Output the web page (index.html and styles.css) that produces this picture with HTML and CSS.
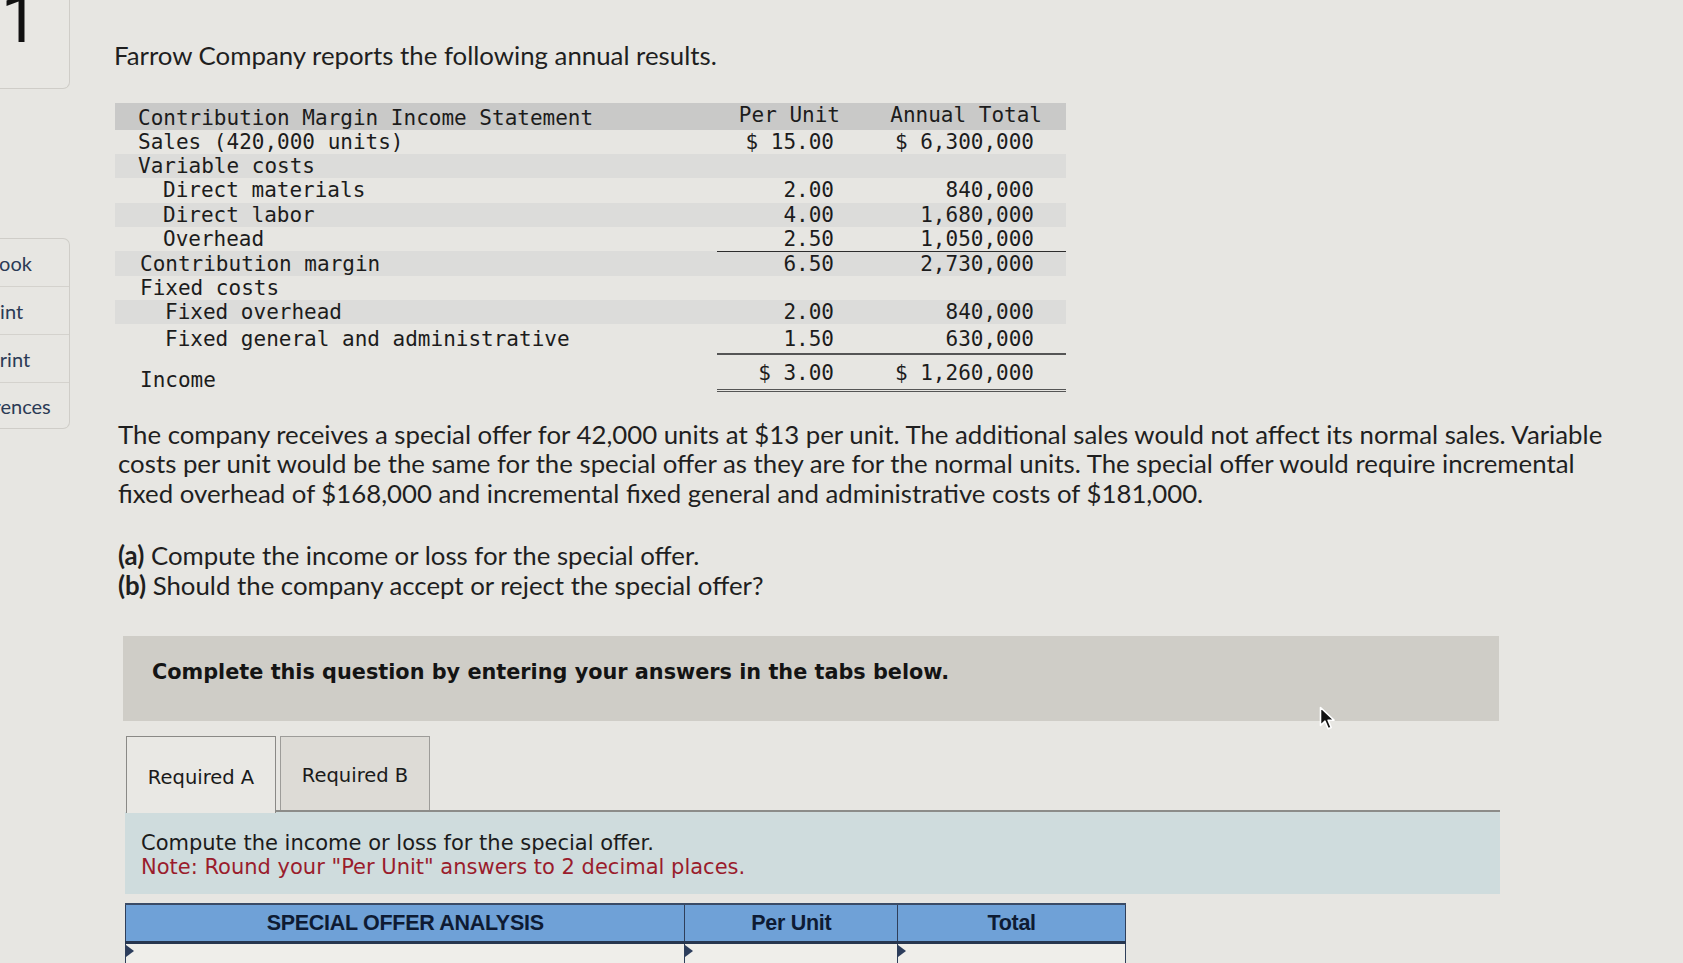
FILE: index.html
```html
<!DOCTYPE html>
<html lang="en">
<head>
<meta charset="utf-8">
<title>Farrow Company - Special Offer</title>
<link rel="stylesheet" href="styles.css">
</head>
<body>
<div class="page">
  <aside class="rail">
    <div class="qnum"><span>1</span></div>
    <ul class="tools">
      <li class="t-ebook"><span>eBook</span></li>
      <li class="t-hint"><span>Hint</span></li>
      <li class="t-print"><span>Print</span></li>
      <li class="t-refs"><span>References</span></li>
    </ul>
  </aside>

  <main class="content">
    <p class="intro">Farrow Company reports the following annual results.</p>

    <table class="cmis">
      <colgroup><col class="c-label"><col class="c-pu"><col class="c-at"></colgroup>
      <tr class="hd shade-dark">
        <td class="l0 hd-label">Contribution Margin Income Statement</td>
        <td class="hd-pu">Per Unit</td>
        <td class="hd-at">Annual Total</td>
      </tr>
      <tr class="r">
        <td class="l0">Sales (420,000 units)</td>
        <td class="pu">$ 15.00</td>
        <td class="at">$ 6,300,000</td>
      </tr>
      <tr class="r shade">
        <td class="l0">Variable costs</td>
        <td class="pu"></td>
        <td class="at"></td>
      </tr>
      <tr class="r">
        <td class="l1">Direct materials</td>
        <td class="pu">2.00</td>
        <td class="at">840,000</td>
      </tr>
      <tr class="r shade">
        <td class="l1">Direct labor</td>
        <td class="pu">4.00</td>
        <td class="at">1,680,000</td>
      </tr>
      <tr class="r">
        <td class="l1">Overhead</td>
        <td class="pu u1">2.50</td>
        <td class="at u1">1,050,000</td>
      </tr>
      <tr class="r shade">
        <td class="l0b">Contribution margin</td>
        <td class="pu">6.50</td>
        <td class="at">2,730,000</td>
      </tr>
      <tr class="r">
        <td class="l0b">Fixed costs</td>
        <td class="pu"></td>
        <td class="at"></td>
      </tr>
      <tr class="r shade">
        <td class="l1b">Fixed overhead</td>
        <td class="pu">2.00</td>
        <td class="at">840,000</td>
      </tr>
      <tr class="r tall">
        <td class="l1b">Fixed general and administrative</td>
        <td class="pu u2">1.50</td>
        <td class="at u2">630,000</td>
      </tr>
      <tr class="r income">
        <td class="l0b inc-label">Income</td>
        <td class="pu u3">$ 3.00</td>
        <td class="at u3">$ 1,260,000</td>
      </tr>
    </table>

    <p class="offer">The company receives a special offer for 42,000 units at $13 per unit. The additional sales would not affect its normal sales. Variable<br>costs per unit would be the same for the special offer as they are for the normal units. The special offer would require incremental<br>fixed overhead of $168,000 and incremental fixed general and administrative costs of $181,000.</p>

    <p class="req"><b>(a)</b> Compute the income or loss for the special offer.<br><b>(b)</b> Should the company accept or reject the special offer?</p>

    <div class="complete">Complete this question by entering your answers in the tabs below.</div>

    <div class="tabs">
      <div class="tab active">Required A</div>
      <div class="tab">Required B</div>
    </div>

    <div class="instr">
      <div>Compute the income or loss for the special offer.</div>
      <div class="note">Note: Round your "Per Unit" answers to 2 decimal places.</div>
    </div>

    <table class="soa">
      <colgroup><col class="s1"><col class="s2"><col class="s3"></colgroup>
      <tr class="soa-hd">
        <th>SPECIAL OFFER ANALYSIS</th>
        <th>Per Unit</th>
        <th>Total</th>
      </tr>
      <tr class="soa-row">
        <td><span class="mark"></span></td>
        <td><span class="mark"></span></td>
        <td><span class="mark"></span></td>
      </tr>
    </table>
  </main>

  <svg class="cursor" width="18" height="26" viewBox="0 0 18 26" aria-hidden="true">
    <path d="M1.5 1.5 L1.5 19.5 L6 15.2 L9.2 22.8 L12.2 21.5 L9.1 14.2 L15 14.2 Z" fill="#111" stroke="#fff" stroke-width="1.6" stroke-linejoin="round"/>
  </svg>
</div>
</body>
</html>
```

FILE: styles.css
```css
html, body {
  margin: 0;
  padding: 0;
}
body {
  background: #e7e6e2;
  color: #1f1f1f;
  font-family: Lato, "Open Sans", "Liberation Sans", sans-serif;
  overflow: hidden;
}
.page {
  position: relative;
  display: flex;
  align-items: flex-start;
  width: 1683px;
  height: 963px;
  overflow: hidden;
}

/* left rail */
.rail {
  width: 70px;
  flex: 0 0 70px;
  display: flex;
  flex-direction: column;
}
.qnum {
  height: 88px;
  border-right: 1px solid #cfcdc8;
  border-bottom: 1px solid #cfcdc8;
  border-bottom-right-radius: 7px;
  overflow: hidden;
  background: #e8e7e3;
}
.qnum span {
  display: block;
  font-family: Roboto, "Liberation Sans", sans-serif;
  font-size: 66px;
  line-height: 1;
  color: #111;
  margin-top: -13px;
  margin-left: 1px;
}
.tools {
  list-style: none;
  margin: 149px 0 0 0;
  padding: 0;
  border: 1px solid #cfcdc8;
  border-left: none;
  border-radius: 0 7px 7px 0;
  overflow: hidden;
}
.tools li {
  height: 47px;
  display: flex;
  align-items: center;
  border-bottom: 1px solid #d4d2cd;
  font-size: 20px;
  color: #2b3a55;
  white-space: nowrap;
}
.tools li:last-child { border-bottom: none; height: 45px; }
.t-ebook span { margin-left: -24px; }
.t-hint span { margin-left: -15px; }
.t-print span { margin-left: -12px; }
.t-refs span { margin-left: -46px; }

/* main column */
.content {
  margin-left: 44px;
  padding-top: 41px;
  width: 1500px;
}
.intro {
  margin: 0;
  font-size: 25.8px;
  line-height: 29px;
  color: #1f1f1f;
}

/* income statement */
.cmis {
  margin-top: 33px;
  margin-left: 1px;
  border-collapse: collapse;
  width: 951px;
  font-family: "DejaVu Sans Mono", "Liberation Mono", monospace;
  font-size: 21px;
  color: #1c1c1c;
}
.c-label { width: 602px; }
.c-pu { width: 143px; }
.c-at { width: 206px; }
.cmis td {
  padding: 0;
  white-space: pre;
  line-height: 24px;
}
.cmis tr.hd { height: 25px; }
.cmis tr.r { height: 24.2px; }
.cmis tr.tall { height: 30px; }
.cmis tr.income { height: 36px; }
.shade-dark td { background: #c9c9c8; }
.shade td { background: #dcdcda; }
.cmis td.hd-label { padding-top: 3px; }
.cmis td.hd-pu { text-align: right; vertical-align: top; padding-right: 20px; }
.cmis td.hd-at { text-align: right; vertical-align: top; padding-right: 24px; }
.cmis td.l0 { padding-left: 23px; }
.cmis td.l0b { padding-left: 25px; }
.cmis td.l1 { padding-left: 48px; }
.cmis td.l1b { padding-left: 50px; }
.cmis td.pu { text-align: right; padding-right: 26px; }
.cmis td.at { text-align: right; padding-right: 32px; }
.u1 { border-bottom: 1.5px solid #2d2d2d; }
.u2 { border-bottom: 2px solid #555; }
.u3 { border-bottom: 3px double #555; }
.cmis .income td { vertical-align: middle; padding-top: 3px; }
.cmis .income td.inc-label { vertical-align: bottom; line-height: 20px; padding-top: 0; }

/* text */
.offer {
  margin: 28px 0 0 4px;
  font-size: 25.8px;
  line-height: 29.5px;
  color: #1f1f1f;
}
.req {
  margin: 33px 0 0 4px;
  font-size: 25.8px;
  line-height: 29.5px;
  color: #1f1f1f;
}
.req b { font-weight: 700; }

/* tab area */
.complete {
  margin: 36px 0 0 9px;
  width: 1376px;
  height: 85px;
  box-sizing: border-box;
  padding: 24px 0 0 29px;
  background: #cfcdc7;
  font-family: "DejaVu Sans", Verdana, sans-serif;
  font-weight: bold;
  font-size: 20.8px;
  line-height: 24px;
  color: #141414;
}
.tabs {
  display: flex;
  gap: 4px;
  margin: 15px 0 0 12px;
  width: 1374px;
  border-bottom: 2px solid #8c8c89;
  align-items: flex-start;
}
.tab {
  box-sizing: border-box;
  width: 150px;
  height: 74px;
  display: flex;
  align-items: center;
  justify-content: center;
  font-family: "DejaVu Sans", Verdana, sans-serif;
  font-size: 19.5px;
  color: #1a1a1a;
  background: #dddbd6;
  border: 1px solid #9d9c99;
  border-bottom: none;
  padding-top: 4px;
}
.tab.active {
  height: 77px;
  background: #e9e8e4;
  border-color: #8a8986;
  margin-bottom: -3px;
  padding-bottom: 0;
  padding-top: 5px;
}
.instr {
  margin-left: 11px;
  width: 1375px;
  height: 82px;
  box-sizing: border-box;
  padding: 19px 0 0 16px;
  background: #cfdcdd;
  font-family: "DejaVu Sans", Verdana, sans-serif;
  font-size: 21px;
  line-height: 24px;
  color: #1b1b1b;
}
.instr .note { color: #9a1c2c; }

/* analysis table */
.soa {
  margin: 9px 0 0 11px;
  width: 1001px;
  border-collapse: collapse;
  font-family: "Liberation Sans", Arial, sans-serif;
}
.s1 { width: 560px; }
.s2 { width: 213px; }
.s3 { width: 228px; }
.soa-hd th {
  height: 36px;
  padding: 0;
  background: #6fa1d7;
  color: #0e1b33;
  font-size: 21.5px;
  font-weight: bold;
  letter-spacing: -0.3px;
  border-top: 2px solid #3a4b66;
  border-bottom: 3px solid #27364f;
  border-left: 1.5px solid #2f3f5a;
  border-right: 1.5px solid #2f3f5a;
}
.soa-row td {
  height: 40px;
  padding: 0;
  background: #efeeea;
  border-left: 1.5px solid #2f3f5a;
  border-right: 1.5px solid #2f3f5a;
  vertical-align: top;
  position: relative;
}
.mark {
  display: block;
  width: 0;
  height: 0;
  margin-top: 1px;
  border-top: 6px solid transparent;
  border-bottom: 6px solid transparent;
  border-left: 8px solid #2c3d5c;
}

.cursor {
  position: absolute;
  left: 1319px;
  top: 706px;
}
```
